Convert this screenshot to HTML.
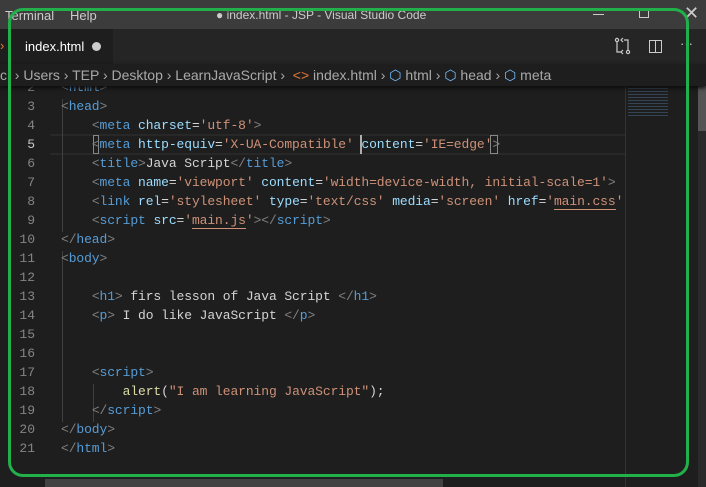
<!DOCTYPE html>
<html><head><meta charset="utf-8"><style>
*{margin:0;padding:0;box-sizing:border-box}
body{width:706px;height:487px;background:#1e1e1e;position:relative;overflow:hidden;font-family:"Liberation Sans",sans-serif}
.title{position:absolute;left:0;top:0;width:706px;height:29px;background:#3c3c3c;color:#ccc;font-size:12px;z-index:3}
.tabs{position:absolute;left:0;top:29px;width:706px;height:35px;background:#252526;z-index:3}
.tab{position:absolute;left:0;top:0;width:113px;height:35px;background:#1e1e1e;color:#fff;font-size:13px}
.bc{position:absolute;left:0;top:64px;width:706px;height:22px;background:#1e1e1e;color:#a9a9a9;font-size:14px;line-height:22px;white-space:pre;box-shadow:0 2px 4px #0c0c0c;z-index:3}
.ln{position:absolute;left:0;width:35px;text-align:right;color:#858585;font:13px/19px "Liberation Mono",monospace}
.cd{position:absolute;left:61px;color:#d4d4d4;font:13px/19px "Liberation Mono",monospace;white-space:pre;letter-spacing:-0.1px}
.t{color:#569cd6}.b{color:#808080}.a{color:#9cdcfe}.s{color:#ce9178}.f{color:#dcdcaa}
.u{border-bottom:1px solid #ce9178}
</style></head><body>
<div class="title"><span style="position:absolute;left:5px;top:8px;font-size:13px">Terminal</span><span style="position:absolute;left:70px;top:8px;font-size:13px">Help</span><span style="position:absolute;left:216px;top:8px">● index.html - JSP - Visual Studio Code</span>
<div style="position:absolute;left:593px;top:14px;width:11px;height:1px;background:#ccc"></div>
<div style="position:absolute;left:639px;top:8px;width:10px;height:10px;border:1px solid #ccc"></div>
<span style="position:absolute;left:684px;top:3px;font-size:18px">✕</span></div>
<div class="tabs"><div class="tab"><span style="position:absolute;left:0;top:9px;color:#e37933">›</span><span style="position:absolute;left:25px;top:10px">index.html</span><span style="position:absolute;left:92px;top:13px;width:9px;height:9px;border-radius:50%;background:#ccc"></span></div>
<svg style="position:absolute;left:614px;top:8px" width="18" height="18" viewBox="0 0 18 18" fill="none" stroke="#ccc" stroke-width="1.2"><circle cx="3" cy="3" r="1.6"/><circle cx="14" cy="15" r="1.6"/><path d="M3 5v10h4M14 13V3h-4M9 1l-2 2 2 2M9 13l-2 2 2 2"/></svg>
<div style="position:absolute;left:649px;top:11px;width:13px;height:13px;border:1px solid #ccc"></div><div style="position:absolute;left:655px;top:11px;width:1px;height:13px;background:#ccc"></div>
<span style="position:absolute;left:680px;top:7px;color:#ccc;font-size:13px">···</span></div>
<div class="bc">c: › Users › TEP › Desktop › LearnJavaScript ›  <span style="color:#e37933">&lt;&gt;</span> index.html › <span style="color:#75beff">⬡</span> html › <span style="color:#75beff">⬡</span> head › <span style="color:#75beff">⬡</span> meta</div>
<div style="position:absolute;left:0;top:86px;width:706px;height:401px;overflow:hidden">
<div style="position:absolute;left:50px;top:48px;width:575px;height:21px;border-top:2px solid #282828;border-bottom:2px solid #282828"></div>
<div style="position:absolute;left:625px;top:0;width:1px;height:401px;background:#333"></div>
<div style="position:absolute;left:698px;top:0;width:8px;height:401px;background:#2a2a2a"></div>
<div style="position:absolute;left:698px;top:0;width:8px;height:45px;background:#555"></div>
<div style="position:absolute;left:45px;top:393px;width:398px;height:8px;background:#424242"></div>
<div style="position:absolute;left:628px;top:2px;width:40px;height:30px;opacity:.5;background:repeating-linear-gradient(#4a6a8a 0 1px,transparent 1px 3px)"></div>
<div style="position:absolute;left:62px;top:13px;width:1px;height:133px;background:#404040"></div>
<div style="position:absolute;left:62px;top:165px;width:1px;height:171px;background:#404040"></div>
<div style="position:absolute;left:93px;top:298px;width:1px;height:38px;background:#404040"></div>
<div style="position:absolute;left:93px;top:49px;width:6px;height:19px;border:1px solid #888"></div>
<div style="position:absolute;left:360px;top:49px;width:2px;height:19px;background:#aeafad"></div>
<div style="position:absolute;left:490px;top:49px;width:8px;height:19px;border:1px solid #888"></div>
</div>
<div style="position:absolute;left:0;top:1px">
<div class="ln" style="top:77px">2</div><div class="cd" style="top:77px"><span class="b">&lt;</span><span class="t">html</span><span class="b">&gt;</span></div>
<div class="ln" style="top:96px">3</div><div class="cd" style="top:96px"><span class="b">&lt;</span><span class="t">head</span><span class="b">&gt;</span></div>
<div class="ln" style="top:115px">4</div><div class="cd" style="top:115px">    <span class="b">&lt;</span><span class="t">meta</span> <span class="a">charset</span>=<span class="s">'utf-8'</span><span class="b">&gt;</span></div>
<div class="ln" style="top:134px;color:#c6c6c6">5</div><div class="cd" style="top:134px">    <span class="b">&lt;</span><span class="t">meta</span> <span class="a">http-equiv</span>=<span class="s">'X-UA-Compatible'</span> <span class="a">content</span>=<span class="s">'IE=edge'</span><span class="b">&gt;</span></div>
<div class="ln" style="top:153px">6</div><div class="cd" style="top:153px">    <span class="b">&lt;</span><span class="t">title</span><span class="b">&gt;</span>Java Script<span class="b">&lt;/</span><span class="t">title</span><span class="b">&gt;</span></div>
<div class="ln" style="top:172px">7</div><div class="cd" style="top:172px">    <span class="b">&lt;</span><span class="t">meta</span> <span class="a">name</span>=<span class="s">'viewport'</span> <span class="a">content</span>=<span class="s">'width=device-width, initial-scale=1'</span><span class="b">&gt;</span></div>
<div class="ln" style="top:191px">8</div><div class="cd" style="top:191px">    <span class="b">&lt;</span><span class="t">link</span> <span class="a">rel</span>=<span class="s">'stylesheet'</span> <span class="a">type</span>=<span class="s">'text/css'</span> <span class="a">media</span>=<span class="s">'screen'</span> <span class="a">href</span>=<span class="s">'<span class="u">main.css</span>'</span></div>
<div class="ln" style="top:210px">9</div><div class="cd" style="top:210px">    <span class="b">&lt;</span><span class="t">script</span> <span class="a">src</span>=<span class="s">'<span class="u">main.js</span>'</span><span class="b">&gt;&lt;/</span><span class="t">script</span><span class="b">&gt;</span></div>
<div class="ln" style="top:229px">10</div><div class="cd" style="top:229px"><span class="b">&lt;/</span><span class="t">head</span><span class="b">&gt;</span></div>
<div class="ln" style="top:248px">11</div><div class="cd" style="top:248px"><span class="b">&lt;</span><span class="t">body</span><span class="b">&gt;</span></div>
<div class="ln" style="top:267px">12</div>
<div class="ln" style="top:286px">13</div><div class="cd" style="top:286px">    <span class="b">&lt;</span><span class="t">h1</span><span class="b">&gt;</span> firs lesson of Java Script <span class="b">&lt;/</span><span class="t">h1</span><span class="b">&gt;</span></div>
<div class="ln" style="top:305px">14</div><div class="cd" style="top:305px">    <span class="b">&lt;</span><span class="t">p</span><span class="b">&gt;</span> I do like JavaScript <span class="b">&lt;/</span><span class="t">p</span><span class="b">&gt;</span></div>
<div class="ln" style="top:324px">15</div>
<div class="ln" style="top:343px">16</div>
<div class="ln" style="top:362px">17</div><div class="cd" style="top:362px">    <span class="b">&lt;</span><span class="t">script</span><span class="b">&gt;</span></div>
<div class="ln" style="top:381px">18</div><div class="cd" style="top:381px">        <span class="f">alert</span>(<span class="s">"I am learning JavaScript"</span>);</div>
<div class="ln" style="top:400px">19</div><div class="cd" style="top:400px">    <span class="b">&lt;/</span><span class="t">script</span><span class="b">&gt;</span></div>
<div class="ln" style="top:419px">20</div><div class="cd" style="top:419px"><span class="b">&lt;/</span><span class="t">body</span><span class="b">&gt;</span></div>
<div class="ln" style="top:438px">21</div><div class="cd" style="top:438px"><span class="b">&lt;/</span><span class="t">html</span><span class="b">&gt;</span></div>
</div>
<div style="position:absolute;left:8px;top:8px;width:681px;height:469px;border:3.5px solid #22b04a;border-radius:15px;z-index:5"></div>
</body></html>
